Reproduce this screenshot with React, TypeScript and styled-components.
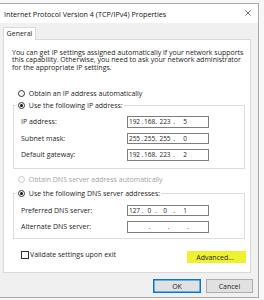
import React, { FC } from "react";
import styled, { createGlobalStyle } from "styled-components";

const GlobalStyle = createGlobalStyle`
	html, body {
		margin: 0;
		padding: 0;
		background: #ffffff;
	}
	body {
		font-family: "Open Sans", "Noto Sans", Arial, sans-serif;
		font-size: 7px;
		color: #1c1c1c;
	}
	* {
		box-sizing: border-box;
	}
`;

const Screen = styled.div`
	width: 264px;
	height: 300px;
	overflow: hidden;
	background: #f7f7f7;
	padding-top: 3px;
`;

const Window = styled.div`
	width: 259px;
	height: 295px;
	border-top: 1px solid #a9a9a9;
	border-right: 1px solid #a9a9a9;
	border-bottom: 1px solid #a9a9a9;
	background: #f0f0f0;
	display: flex;
	flex-direction: column;
`;

const TitleBar = styled.div`
	height: 19px;
	background: #ffffff;
	display: flex;
	align-items: center;
	justify-content: space-between;
	padding: 0 7px 0 4px;
	font-size: 7.2px;
	color: #111;
`;

const CloseIcon = styled.svg`
	width: 6px;
	height: 6px;
	margin-top: -2px;
`;

const Body = styled.div`
	flex: 1;
	padding: 4px 5px 0 3px;
	display: flex;
	flex-direction: column;
`;

const TabStrip = styled.div`
	display: flex;
`;

const Tab = styled.div`
	width: 33px;
	height: 13px;
	border: 1px solid #d9d9d9;
	border-bottom: 0;
	background: #ffffff;
	margin-bottom: -1px;
	position: relative;
	z-index: 1;
	display: flex;
	align-items: center;
	justify-content: center;
	padding-bottom: 1px;
`;

const Panel = styled.div`
	width: 248px;
	height: 234px;
	border: 1px solid #d9d9d9;
	background: #ffffff;
	display: flex;
	flex-direction: column;
`;

const Intro = styled.p`
	margin: 8.6px 0 0 8px;
	line-height: 7.5px;
	white-space: nowrap;
`;

const OptionRow = styled.label<{ $top: number; $disabled?: boolean }>`
	display: flex;
	align-items: center;
	gap: 3.8px;
	height: 10px;
	margin: ${(p) => p.$top}px 0 0 14px;
	color: ${(p) => (p.$disabled ? "#a2a2a2" : "inherit")};
`;

const Radio = styled.span<{ $checked?: boolean; $disabled?: boolean }>`
	width: 7px;
	height: 7px;
	flex: none;
	border-radius: 50%;
	border: 1px solid ${(p) => (p.$disabled ? "#c9c9c9" : "#333333")};
	background: #ffffff;
	display: inline-flex;
	align-items: center;
	justify-content: center;
	&::after {
		content: "";
		width: 3px;
		height: 3px;
		border-radius: 50%;
		background: #111111;
		display: ${(p) => (p.$checked ? "block" : "none")};
	}
`;

const Group = styled.fieldset<{ $top: number; $padTop: number; $padBottom: number }>`
	margin: ${(p) => p.$top}px 5px 0 9px;
	padding: ${(p) => p.$padTop}px 0 ${(p) => p.$padBottom}px 0;
	min-inline-size: 0;
	border: 1px solid #dcdcdc;
	display: grid;
	grid-template-columns: 113px 82px;
	row-gap: 5px;
	align-items: center;
`;

const Legend = styled.legend`
	margin-left: 3px;
	padding: 0 1px;
	height: 10px;
	display: flex;
	align-items: center;
	gap: 3.8px;
`;

const FieldLabel = styled.span`
	padding-left: 7px;
`;

const IpBox = styled.div`
	width: 82px;
	height: 11.5px;
	border: 1px solid #7d7d7d;
	background: #ffffff;
	display: flex;
	align-items: center;
	font-size: 6.5px;
`;

const Octet = styled.span<{ $w: number }>`
	width: ${(p) => p.$w}px;
	text-align: center;
	flex: none;
`;

const Dot = styled.span`
	width: 3px;
	text-align: center;
	flex: none;
`;

const BottomRow = styled.div`
	display: flex;
	justify-content: space-between;
	align-items: flex-start;
	margin: 10.5px 4px 0 17px;
`;

const CheckRow = styled.label`
	display: flex;
	align-items: center;
	gap: 1px;
	height: 10px;
`;

const CheckBox = styled.span`
	width: 8px;
	height: 8px;
	border: 1px solid #333333;
	background: #ffffff;
	flex: none;
`;

const AdvancedButton = styled.div`
	width: 59px;
	height: 11.3px;
	margin-top: 1.7px;
	background: #eef22e;
	display: flex;
	align-items: center;
	justify-content: center;
	padding-right: 3px;
`;

const Footer = styled.div`
	display: flex;
	justify-content: flex-end;
	gap: 5px;
	margin-top: 6px;
`;

const DialogButton = styled.div<{ $w: number; $default?: boolean }>`
	width: ${(p) => p.$w}px;
	height: 14px;
	background: #e1e1e1;
	border: 1px solid ${(p) => (p.$default ? "#0078d7" : "#adadad")};
	box-shadow: ${(p) => (p.$default ? "inset 0 0 0 0.5px #0078d7" : "none")};
	display: flex;
	align-items: center;
	justify-content: center;
`;

const FILLED = [13, 10.5, 15, 19];
const EMPTY = [20.2, 16, 16.3, 19];

const IpField: FC<{ octets?: string[] }> = ({ octets }) => {
	const widths = octets ? FILLED : EMPTY;
	return (
		<IpBox>
			{widths.map((w, i) => (
				<React.Fragment key={i}>
					<Octet $w={w}>{octets ? octets[i] : ""}</Octet>
					{i < 3 && <Dot>.</Dot>}
				</React.Fragment>
			))}
		</IpBox>
	);
};

const App: FC = () => {
	return (
		<Screen>
			<GlobalStyle />
			<Window>
				<TitleBar>
					<span>Internet Protocol Version 4 (TCP/IPv4) Properties</span>
					<CloseIcon viewBox="0 0 6 6">
						<path d="M0.3 0.3 L5.7 5.7 M5.7 0.3 L0.3 5.7" stroke="#333" strokeWidth="0.7" />
					</CloseIcon>
				</TitleBar>
				<Body>
					<TabStrip>
						<Tab>General</Tab>
					</TabStrip>
					<Panel>
						<Intro>
							You can get IP settings assigned automatically if your network supports
							<br />
							this capability. Otherwise, you need to ask your network administrator
							<br />
							for the appropriate IP settings.
						</Intro>

						<OptionRow $top={17.1}>
							<Radio />
							Obtain an IP address automatically
						</OptionRow>

						<Group $top={2.5} $padTop={5.5} $padBottom={7}>
							<Legend>
								<Radio $checked />
								Use the following IP address:
							</Legend>
							<FieldLabel>IP address:</FieldLabel>
							<IpField octets={["192", "168", "223", "5"]} />
							<FieldLabel>Subnet mask:</FieldLabel>
							<IpField octets={["255", "255", "255", "0"]} />
							<FieldLabel>Default gateway:</FieldLabel>
							<IpField octets={["192", "168", "223", "2"]} />
						</Group>

						<OptionRow $top={6} $disabled>
							<Radio $disabled />
							Obtain DNS server address automatically
						</OptionRow>

						<Group $top={4} $padTop={6} $padBottom={5.5}>
							<Legend>
								<Radio $checked />
								Use the following DNS server addresses:
							</Legend>
							<FieldLabel>Preferred DNS server:</FieldLabel>
							<IpField octets={["127", "0", "0", "1"]} />
							<FieldLabel>Alternate DNS server:</FieldLabel>
							<IpField />
						</Group>

						<BottomRow>
							<CheckRow>
								<CheckBox />
								Validate settings upon exit
							</CheckRow>
							<AdvancedButton>Advanced...</AdvancedButton>
						</BottomRow>
					</Panel>
					<Footer>
						<DialogButton $w={48} $default>
							OK
						</DialogButton>
						<DialogButton $w={47}>Cancel</DialogButton>
					</Footer>
				</Body>
			</Window>
		</Screen>
	);
};

export default App;
